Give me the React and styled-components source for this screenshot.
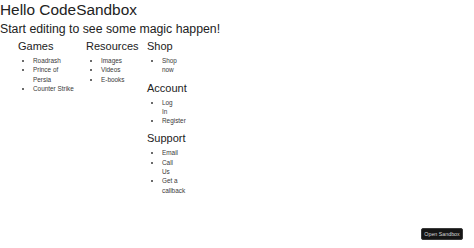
import React from "react";
import styled, { createGlobalStyle } from "styled-components";

const GlobalStyle = createGlobalStyle`
  html, body {
    margin: 0;
    padding: 0;
    background: #fff;
  }
  body {
    font-family: "Liberation Sans", Arial, sans-serif;
    color: #222;
  }
`;

const Page = styled.div`
  min-height: 248px;
`;

const Title = styled.h1`
  margin: 0;
  font-size: 15.4px;
  line-height: 20px;
  font-weight: 400;
`;

const Subtitle = styled.h2`
  margin: 0;
  font-size: 12.3px;
  line-height: 18px;
  font-weight: 400;
`;

const Menu = styled.nav`
  display: flex;
  align-items: flex-start;
  gap: 10px;
  padding-left: 18px;
`;

const Column = styled.div`
  width: ${(p) => (p.width ? `${p.width}px` : "min-content")};
  flex-shrink: 0;
`;

const Heading = styled.h3`
  margin: 0;
  font-size: 11px;
  line-height: 16px;
  font-weight: 400;
  white-space: nowrap;
`;

const List = styled.ul`
  margin: 2px 0 5px;
  padding-left: 15px;
  list-style: disc;
`;

const Item = styled.li`
  font-size: 6.4px;
  line-height: 9.3px;
  color: #3a3a3a;
  width: ${(p) => (p.narrow ? "min-content" : "auto")};
`;

const OpenButton = styled.button`
  position: fixed;
  right: 11px;
  bottom: 8px;
  width: 42px;
  height: 12px;
  padding: 0;
  border: 1px solid #3a3a3a;
  border-radius: 2px;
  background: #151515;
  color: #d8d8d8;
  font-family: "Liberation Sans", Arial, sans-serif;
  font-size: 5.3px;
  line-height: 10px;
  white-space: nowrap;
  cursor: pointer;
`;

const sections = [
  { title: "Games", width: 58, items: ["Roadrash", "Prince of Persia", "Counter Strike"] },
  { title: "Resources", width: 51, items: ["Images", "Videos", "E-books"] },
];

const stacked = [
  { title: "Shop", items: ["Shop now"] },
  { title: "Account", items: ["Log In", "Register"] },
  { title: "Support", items: ["Email", "Call Us", "Get a callback"] },
];

const Group = ({ title, items, narrow }) => (
  <>
    <Heading>{title}</Heading>
    <List>
      {items.map((item) => (
        <Item key={item} narrow={narrow}>
          {item}
        </Item>
      ))}
    </List>
  </>
);

export default function App() {
  return (
    <Page>
      <GlobalStyle />
      <Title>Hello CodeSandbox</Title>
      <Subtitle>Start editing to see some magic happen!</Subtitle>
      <Menu>
        {sections.map((s) => (
          <Column key={s.title} width={s.width}>
            <Group title={s.title} items={s.items} />
          </Column>
        ))}
        <Column>
          {stacked.map((s) => (
            <Group key={s.title} title={s.title} items={s.items} narrow />
          ))}
        </Column>
      </Menu>
      <OpenButton>Open Sandbox</OpenButton>
    </Page>
  );
}
